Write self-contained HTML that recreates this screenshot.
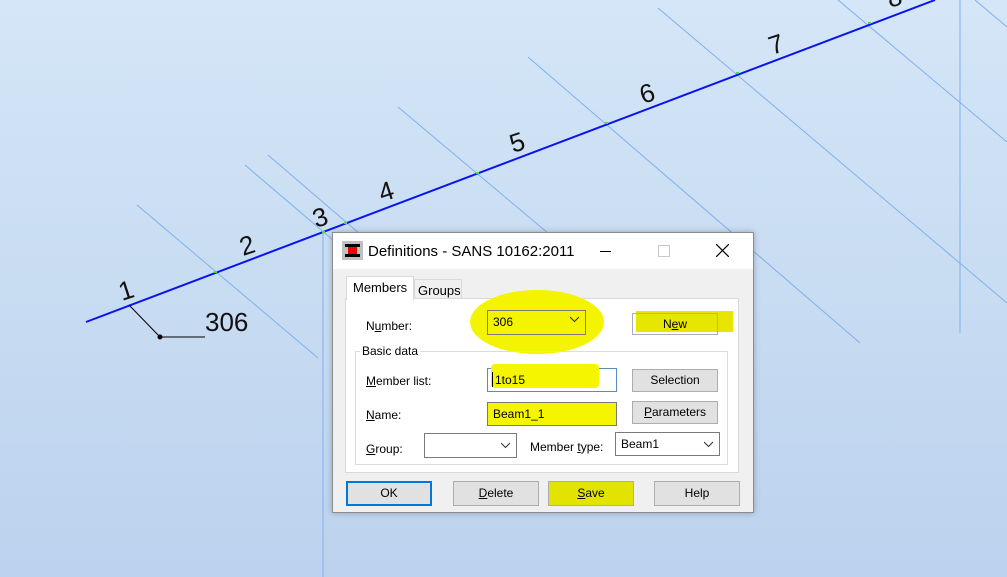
<!DOCTYPE html>
<html><head><style>
body{margin:0;width:1007px;height:577px;overflow:hidden;position:relative;background:linear-gradient(180deg,#d4e6f7 0%,#c8dcf2 50%,#bcd2ee 100%);font-family:"Liberation Sans",sans-serif;}
.a{position:absolute;}
.t{font-size:12px;color:#000;}
.btn{position:absolute;background:#e1e1e1;border:1px solid #adadad;box-sizing:border-box;font-size:12px;text-align:center;}
.ed{position:absolute;background:#fff;border:1px solid #7a7a7a;box-sizing:border-box;font-size:12px;}
.chev{position:absolute;right:6px;top:4px;width:9px;height:9px}
u{text-decoration:underline}
</style></head><body>
<svg class="a" style="left:0;top:0" width="1007" height="577">
<g stroke="#7fb0ef" stroke-width="1" fill="none">
<line x1="137" y1="205" x2="318" y2="358"/>
<line x1="245" y1="165" x2="340" y2="246"/>
<line x1="268" y1="155" x2="360" y2="234"/>
<line x1="398" y1="107" x2="618" y2="292"/>
<line x1="528" y1="57" x2="860" y2="343"/>
<line x1="658" y1="8" x2="1007" y2="303"/>
<line x1="838" y1="0" x2="1007" y2="142"/>
<line x1="975" y1="0" x2="1007" y2="27"/>
<line x1="960" y1="0" x2="960" y2="333"/>
<line x1="323" y1="232" x2="323" y2="577"/>
</g>
<line x1="86" y1="322" x2="935" y2="0" stroke="#0a14f0" stroke-width="2"/>
<g fill="#3ee03e"><rect x="214" y="271" width="3" height="2"/><rect x="322" y="231" width="3" height="2"/><rect x="344" y="222" width="3" height="2"/><rect x="476" y="172" width="3" height="2"/><rect x="605" y="122" width="3" height="2"/><rect x="736" y="72" width="3" height="2"/><rect x="868" y="22" width="3" height="2"/></g>
<polyline points="129,305 160,337 205,337" stroke="#000" fill="none" stroke-width="1"/>
<circle cx="160" cy="337" r="2.5" fill="#000"/>
<g font-family="Liberation Sans" font-size="26" fill="#111">
<text x="205" y="331">306</text>
<text transform="translate(122,301) rotate(-18)">1</text>
<text transform="translate(243,256) rotate(-18)">2</text>
<text transform="translate(316,228) rotate(-18)">3</text>
<text transform="translate(382,202) rotate(-18)">4</text>
<text transform="translate(513,153) rotate(-18)">5</text>
<text transform="translate(643,104) rotate(-18)">6</text>
<text transform="translate(772,55) rotate(-18)">7</text>
<text transform="translate(890,8) rotate(-18)">8</text>
</g>
</svg>
<div class="a" style="left:332px;top:232px;width:422px;height:281px;background:#f0f0f0;border:1px solid #8c8c8c;box-sizing:border-box;box-shadow:0 0 6px rgba(0,0,0,.25)">
<div class="a" style="left:0;top:0;width:420px;height:36px;background:#fff"></div>
</div>
<div class="a" style="left:342px;top:241px;width:21px;height:19px;background:#c0c0c0">
<div class="a" style="left:3px;top:3px;width:15px;height:3px;background:#000"></div>
<div class="a" style="left:6px;top:6px;width:9px;height:8px;background:#e00"></div>
<div class="a" style="left:3px;top:13px;width:15px;height:3px;background:#000"></div>
</div>
<div class="a" style="left:368px;top:243px;font-size:15px;color:#000">Definitions - SANS 10162:2011</div>
<div class="a" style="left:600px;top:251px;width:11px;height:1px;background:#000"></div>
<div class="a" style="left:658px;top:245px;width:10px;height:10px;border:1px solid #c8c8c8"></div>
<svg class="a" style="left:716px;top:244px" width="13" height="13"><path d="M0 0L13 13M13 0L0 13" stroke="#000" stroke-width="1.2"/></svg>
<div class="a" style="left:345px;top:298px;width:394px;height:175px;background:#fff;border:1px solid #d9d9d9;box-sizing:border-box"></div>
<div class="a" style="left:414px;top:279px;width:48px;height:20px;background:#f0f0f0;border:1px solid #d9d9d9;box-sizing:border-box"></div>
<div class="a t" style="left:418px;top:283px;font-size:13px">Groups</div>
<div class="a" style="left:346px;top:276px;width:68px;height:24px;background:#fff;border:1px solid #d9d9d9;border-bottom:none;box-sizing:border-box"></div>
<div class="a t" style="left:353px;top:280px;font-size:13px">Members</div>
<div class="a" style="left:470px;top:290px;width:134px;height:64px;border-radius:50%;background:#f4f400"></div>
<div class="a" style="left:636px;top:311px;width:97px;height:21px;background:#e6e600"></div>
<div class="a t" style="left:366px;top:319px">N<u>u</u>mber:</div>
<div class="ed" style="left:487px;top:310px;width:99px;height:25px;background:transparent"><span style="position:absolute;left:5px;top:4px">306</span><svg class="chev" viewBox="0 0 9 9"><path d="M0 2L4.5 6.5L9 2" stroke="#333" fill="none"/></svg></div>
<div class="btn" style="left:632px;top:313px;width:86px;height:22px;background:transparent;line-height:20px">N<u>e</u>w</div>
<div class="a" style="left:355px;top:351px;width:373px;height:114px;border:1px solid #dcdcdc;box-sizing:border-box"></div>
<div class="a t" style="left:360px;top:344px;background:#fff;padding:0 2px">Basic data</div>
<div class="a t" style="left:366px;top:374px"><u>M</u>ember list:</div>
<div class="ed" style="left:487px;top:368px;width:130px;height:24px;border-color:#5a8ac0"></div>
<div class="a" style="left:491px;top:364px;width:108px;height:24px;background:#f5f500;border-radius:4px"></div>
<div class="a" style="left:492px;top:372px;width:1px;height:15px;background:#000"></div>
<div class="a t" style="left:495px;top:373px">1to15</div>
<div class="btn" style="left:632px;top:369px;width:86px;height:23px;line-height:21px">Selection</div>
<div class="a t" style="left:366px;top:408px"><u>N</u>ame:</div>
<div class="ed" style="left:487px;top:402px;width:130px;height:24px;background:#f5f500"><span style="position:absolute;left:5px;top:4px">Beam1_1</span></div>
<div class="btn" style="left:632px;top:401px;width:86px;height:23px;line-height:21px"><u>P</u>arameters</div>
<div class="a t" style="left:366px;top:442px"><u>G</u>roup:</div>
<div class="ed" style="left:424px;top:433px;width:93px;height:25px"><svg class="chev" style="top:7px" viewBox="0 0 9 9"><path d="M0 2L4.5 6.5L9 2" stroke="#333" fill="none"/></svg></div>
<div class="a t" style="left:530px;top:440px">Member <u>t</u>ype:</div>
<div class="ed" style="left:615px;top:432px;width:105px;height:24px"><span style="position:absolute;left:5px;top:4px">Beam1</span><svg class="chev" style="top:7px" viewBox="0 0 9 9"><path d="M0 2L4.5 6.5L9 2" stroke="#333" fill="none"/></svg></div>
<div class="btn" style="left:346px;top:481px;width:86px;height:25px;border:2px solid #0078d7;line-height:21px">OK</div>
<div class="btn" style="left:453px;top:481px;width:86px;height:25px;line-height:23px"><u>D</u>elete</div>
<div class="btn" style="left:548px;top:481px;width:86px;height:25px;background:#e3e300;line-height:23px"><u>S</u>ave</div>
<div class="btn" style="left:654px;top:481px;width:86px;height:25px;line-height:23px">Help</div>
</body></html>
